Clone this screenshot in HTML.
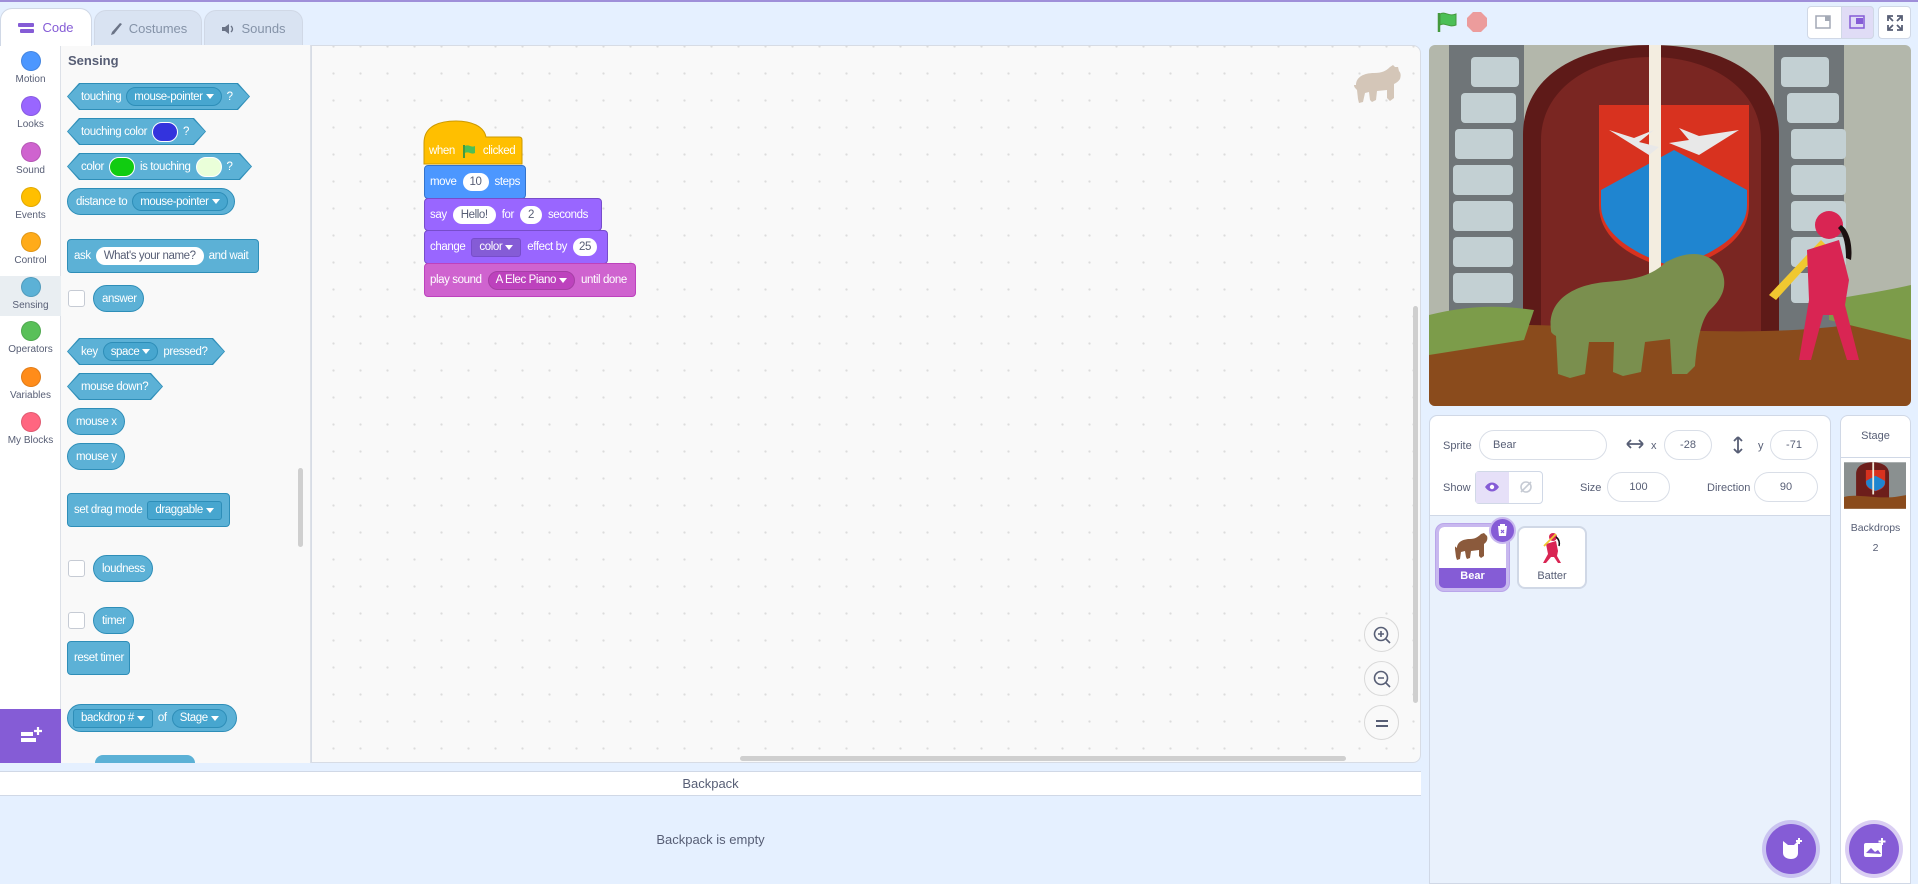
<!DOCTYPE html>
<html><head><meta charset="utf-8">
<style>
*{box-sizing:border-box;margin:0;padding:0}
body{width:1918px;height:884px;overflow:hidden;background:#e5f0ff;font-family:"Liberation Sans",Arial,sans-serif;position:relative}
.a{position:absolute}
.tab{position:absolute;top:10px;height:36px;border:1px solid #d0d8e6;border-bottom:none;border-radius:12px 12px 0 0;background:#d9e3f2;color:#8593a8;font-size:13px;display:flex;align-items:center;justify-content:center;gap:6px}
.cat{position:absolute;left:0;width:61px;text-align:center;font-size:10px;color:#575e75}
.cat i{display:block;width:20px;height:20px;border-radius:50%;margin:0 auto 3px;border:1px solid rgba(0,0,0,.12)}
.blk{position:absolute;color:#fff;font-size:11.5px;letter-spacing:-0.4px;display:flex;align-items:center;gap:5px;white-space:nowrap}
.sen{background:#5cb1d6;border:1px solid #2e8eb8}
.hex{clip-path:polygon(12px 0,calc(100% - 12px) 0,100% 50%,calc(100% - 12px) 100%,12px 100%,0 50%);border:none;padding:0 13px}
.rep{border-radius:16px;padding:0 8px}
.stk{border-radius:4px;padding:0 6px}
.dd{background:#47a6cf;border:1px solid #2e8eb8;border-radius:14px;padding:2px 7px;display:flex;align-items:center;gap:3px}
.dd:after{content:"";border:4px solid transparent;border-top:5px solid #fff;margin-top:4px}
.inp{background:#fff;color:#575e75;border-radius:12px;padding:3px 8px}
.cb{position:absolute;left:68px;width:17px;height:17px;background:#fff;border:1px solid #c6cbd4;border-radius:3px}
.sb{position:absolute;display:flex;align-items:center;padding:0 5px;gap:6px;color:#fff;font-size:11.5px;letter-spacing:-0.4px;border-radius:4px;white-space:nowrap}
.fld{position:absolute;height:30px;border:1px solid #d9dee7;border-radius:16px;background:#fff;font-size:11px;color:#575e75;display:flex;align-items:center;justify-content:center}
.lbl{position:absolute;font-size:11px;color:#575e75}
.zb{position:absolute;left:1364px;width:35px;height:35px;border-radius:50%;border:1px solid #d9d9d9;background:#f9f9f9;display:flex;align-items:center;justify-content:center}
</style></head><body>
<div class="a" style="left:0;top:0;width:1918px;height:2px;background:#9f8fd9"></div>

<div class="tab" style="left:0;width:92px;background:#fff;color:#855cd6;top:8px;height:38px;z-index:2">
<svg width="18" height="12"><rect x="0" y="1" width="16" height="4" rx="1" fill="#855cd6"/><rect x="2" y="7" width="14" height="4" rx="1" fill="#855cd6"/></svg>Code</div>
<div class="tab" style="left:94px;width:108px"><svg width="14" height="14"><path d="M2 13l3-1 8-10-2-1-8 9z" fill="#6b7487"/></svg>Costumes</div>
<div class="tab" style="left:204px;width:99px"><svg width="14" height="14"><path d="M1 5h3l4-3v10l-4-3H1z" fill="#6b7487"/><path d="M10 4c2 2 2 4 0 6" stroke="#6b7487" fill="none" stroke-width="1.4"/></svg>Sounds</div>

<div class="a" style="left:0;top:45px;width:61px;height:718px;background:#fff;border-right:1px solid #dde1e8"></div>
<div class="a" style="left:0;top:276px;width:61px;height:40px;background:#e9eef2"></div>
<div class="cat" style="top:51px"><i style="background:#4c97ff"></i>Motion</div>
<div class="cat" style="top:96px"><i style="background:#9966ff"></i>Looks</div>
<div class="cat" style="top:142px"><i style="background:#cf63cf"></i>Sound</div>
<div class="cat" style="top:187px"><i style="background:#ffbf00"></i>Events</div>
<div class="cat" style="top:232px"><i style="background:#ffab19"></i>Control</div>
<div class="cat" style="top:277px"><i style="background:#5cb1d6"></i>Sensing</div>
<div class="cat" style="top:321px"><i style="background:#59c059"></i>Operators</div>
<div class="cat" style="top:367px"><i style="background:#ff8c1a"></i>Variables</div>
<div class="cat" style="top:412px"><i style="background:#ff6680"></i>My Blocks</div>
<div class="a" style="left:0;top:709px;width:61px;height:54px;background:#855cd6;display:flex;align-items:center;justify-content:center">
<svg width="26" height="22"><rect x="3" y="7" width="12" height="4" fill="#fff"/><rect x="3" y="13" width="15" height="4" fill="#fff"/><path d="M20 2v8M16 6h8" stroke="#fff" stroke-width="2.2"/></svg></div>

<div class="a" style="left:61px;top:45px;width:250px;height:718px;background:#f9f9f9;border-right:1px solid #dde1e8"></div>
<div class="a" style="left:68px;top:53px;font-size:13px;font-weight:bold;color:#575e75">Sensing</div>
<div class="a" style="left:298px;top:468px;width:5px;height:79px;background:#cfcfcf;border-radius:3px"></div>

<div class="blk hex" style="left:67px;top:83px;width:183px;height:27px;background:#2e8eb8"><div class="blk hex" style="left:1px;top:1px;right:1px;bottom:1px;background:#5cb1d6">touching <span class="dd">mouse-pointer</span> ?</div></div>
<div class="blk hex" style="left:67px;top:118px;width:139px;height:27px;background:#2e8eb8"><div class="blk hex" style="left:1px;top:1px;right:1px;bottom:1px;background:#5cb1d6">touching color <span style="width:26px;height:20px;border-radius:10px;background:#3333dd;border:1px solid #fff;display:inline-block"></span> ?</div></div>
<div class="blk hex" style="left:67px;top:153px;width:185px;height:27px;background:#2e8eb8"><div class="blk hex" style="left:1px;top:1px;right:1px;bottom:1px;background:#5cb1d6">color <span style="width:26px;height:20px;border-radius:10px;background:#11cc11;border:1px solid #fff;display:inline-block"></span> is touching <span style="width:26px;height:20px;border-radius:10px;background:#eaffd9;border:1px solid #fff;display:inline-block"></span> ?</div></div>
<div class="blk sen rep" style="left:67px;top:188px;width:168px;height:27px">distance to <span class="dd">mouse-pointer</span></div>
<div class="blk sen stk" style="left:67px;top:239px;width:192px;height:34px">ask <span class="inp">What's your name?</span> and wait</div>
<div class="cb" style="top:290px"></div>
<div class="blk sen rep" style="left:93px;top:285px;width:51px;height:27px">answer</div>
<div class="blk hex" style="left:67px;top:338px;width:158px;height:27px;background:#2e8eb8"><div class="blk hex" style="left:1px;top:1px;right:1px;bottom:1px;background:#5cb1d6">key <span class="dd">space</span> pressed?</div></div>
<div class="blk hex" style="left:67px;top:373px;width:96px;height:27px;background:#2e8eb8"><div class="blk hex" style="left:1px;top:1px;right:1px;bottom:1px;background:#5cb1d6">mouse down?</div></div>
<div class="blk sen rep" style="left:67px;top:408px;width:58px;height:27px">mouse x</div>
<div class="blk sen rep" style="left:67px;top:443px;width:58px;height:27px">mouse y</div>
<div class="blk sen stk" style="left:67px;top:493px;width:163px;height:34px">set drag mode <span class="dd" style="border-radius:3px">draggable</span></div>
<div class="cb" style="top:560px"></div>
<div class="blk sen rep" style="left:93px;top:555px;width:60px;height:27px">loudness</div>
<div class="cb" style="top:612px"></div>
<div class="blk sen rep" style="left:93px;top:607px;width:41px;height:27px">timer</div>
<div class="blk sen stk" style="left:67px;top:641px;width:63px;height:34px">reset timer</div>
<div class="blk sen rep" style="left:67px;top:704px;width:170px;height:28px;padding:0 5px">
<span class="dd" style="border-radius:3px">backdrop #</span> of <span class="dd">Stage</span></div>
<div class="a" style="left:95px;top:755px;width:100px;height:8px;background:#5cb1d6;border-radius:8px 8px 0 0"></div>

<div class="a" style="left:311px;top:45px;width:1110px;height:718px;background-color:#f9f9f9;background-image:radial-gradient(#dcdcdc 1px,transparent 1.3px);background-size:27px 27px;background-position:8px 14px;border:1px solid #d7dce5;border-radius:0 8px 8px 0"></div>
<svg class="a" style="left:1352px;top:63px" width="50" height="45" viewBox="0 0 50 45"><path d="M4 22c0-8 8-12 18-12 8 0 12-2 16-6l3-2 2 2 3 0 1 4c2 2 2 5 1 8-2 3-4 4-6 5l0 14-4 3-3-3 0-8-10 1-1 9-4 2-2-2-1-8-4 1-2 9-4 1-1-4-1-9c-2-2-3-3-3-5z" fill="#d4c6b8"/></svg>
<div class="a" style="left:1413px;top:306px;width:5px;height:397px;background:#cfcfcf;border-radius:3px"></div>
<div class="a" style="left:740px;top:756px;width:606px;height:5px;background:#cfcfcf;border-radius:3px"></div>
<div class="zb" style="top:617px"><svg width="20" height="20"><circle cx="9" cy="9" r="6.5" fill="none" stroke="#575e75" stroke-width="1.6"/><path d="M14 14l4 4M6 9h6M9 6v6" stroke="#575e75" stroke-width="1.6"/></svg></div>
<div class="zb" style="top:661px"><svg width="20" height="20"><circle cx="9" cy="9" r="6.5" fill="none" stroke="#575e75" stroke-width="1.6"/><path d="M14 14l4 4M6 9h6" stroke="#575e75" stroke-width="1.6"/></svg></div>
<div class="zb" style="top:705px"><svg width="20" height="20"><path d="M4 8h12M4 13h12" stroke="#575e75" stroke-width="2"/></svg></div>

<!-- script -->
<svg class="a" style="left:423px;top:119px" width="100" height="48"><path d="M1 24C1 6 18 2 33 2s28 5 30 16L96 18c2 0 3 1 3 3v24H1z" fill="#ffbf00" stroke="#cc9900"/></svg>
<div class="sb" style="left:424px;top:137px;height:28px;background:transparent">when <svg width="16" height="16"><path d="M3 2v13" stroke="#45993d" stroke-width="2"/><path d="M4 3c4-2 6 2 10 0v7c-4 2-6-2-10 0z" fill="#4cbf56"/></svg> clicked</div>
<div class="sb" style="left:424px;top:165px;width:102px;height:34px;background:#4c97ff;border:1px solid #3373cc">move <span class="inp" style="padding:3px 7px">10</span> steps</div>
<div class="sb" style="left:424px;top:198px;width:178px;height:33px;background:#9966ff;border:1px solid #774dcb">say <span class="inp">Hello!</span> for <span class="inp">2</span> seconds</div>
<div class="sb" style="left:424px;top:230px;width:184px;height:34px;background:#9966ff;border:1px solid #774dcb">change <span class="dd" style="background:#855cd6;border-color:#774dcb;border-radius:3px">color</span> effect by <span class="inp" style="padding:3px 6px">25</span></div>
<div class="sb" style="left:424px;top:263px;width:212px;height:34px;background:#cf63cf;border:1px solid #bd42bd">play sound <span class="dd" style="background:#bd42bd;border-color:#a63fa6">A Elec Piano</span> until done</div>

<div class="a" style="left:0;top:771px;width:1421px;height:113px;background:#e5f0ff;border-top:1px solid #d0d8e6"></div>
<div class="a" style="left:0;top:772px;width:1421px;height:24px;background:#fff;border-bottom:1px solid #d0d8e6;text-align:center;font-size:13px;color:#575e75;line-height:24px">Backpack</div>
<div class="a" style="left:0;top:832px;width:1421px;text-align:center;font-size:13px;color:#575e75">Backpack is empty</div>

<svg class="a" style="left:1436px;top:11px" width="22" height="22"><path d="M3 2v19" stroke="#45993d" stroke-width="2.5"/><path d="M4 3c5-3 9 3 16 0v11c-7 3-11-3-16 0z" fill="#4cbf56" stroke="#45993d"/></svg>
<div class="a" style="left:1467px;top:12px;width:20px;height:20px;background:#ec9c9c;clip-path:polygon(30% 0,70% 0,100% 30%,100% 70%,70% 100%,30% 100%,0 70%,0 30%)"></div>
<div class="a" style="left:1807px;top:6px;width:67px;height:33px;border:1px solid #d0d8e6;border-radius:4px;background:#fff"></div>
<div class="a" style="left:1841px;top:6px;width:33px;height:33px;background:#e0dcf6;border:1px solid #d0d8e6;border-radius:0 4px 4px 0"></div>
<svg class="a" style="left:1815px;top:15px" width="16" height="14"><rect x="1" y="1" width="14" height="12" fill="none" stroke="#a3a9b5" stroke-width="1.5"/><rect x="10" y="1" width="5" height="5" fill="#a3a9b5"/></svg>
<svg class="a" style="left:1849px;top:15px" width="16" height="14"><rect x="1" y="1" width="14" height="12" fill="none" stroke="#855cd6" stroke-width="1.5"/><rect x="7" y="3" width="7" height="6" fill="#855cd6"/></svg>
<div class="a" style="left:1878px;top:6px;width:33px;height:33px;border:1px solid #d0d8e6;border-radius:4px;background:#fff"></div>
<svg class="a" style="left:1886px;top:14px" width="18" height="18"><path d="M2 7V2h5M11 2h5v5M16 11v5h-5M7 16H2v-5M2 2l5 5M16 2l-5 5M16 16l-5-5M2 16l5-5" stroke="#575e75" stroke-width="1.8" fill="none"/></svg>

<!-- stage -->
<svg class="a" style="left:1429px;top:45px" width="482" height="361" viewBox="0 0 482 361">
<defs><clipPath id="c"><rect width="482" height="361" rx="6"/></clipPath></defs>
<g clip-path="url(#c)">
<rect width="482" height="361" fill="#b3b7ab"/>
<rect x="20" y="0" width="75" height="290" fill="#6f7578"/>
<rect x="345" y="0" width="70" height="290" fill="#6f7578"/>
<g fill="#c3d0d3">
<rect x="42" y="12" width="48" height="30" rx="4"/><rect x="32" y="48" width="55" height="30" rx="4"/><rect x="26" y="84" width="58" height="30" rx="4"/><rect x="24" y="120" width="60" height="30" rx="4"/><rect x="24" y="156" width="60" height="30" rx="4"/><rect x="24" y="192" width="60" height="30" rx="4"/><rect x="24" y="228" width="60" height="30" rx="4"/>
<rect x="352" y="12" width="48" height="30" rx="4"/><rect x="358" y="48" width="52" height="30" rx="4"/><rect x="362" y="84" width="55" height="30" rx="4"/><rect x="362" y="120" width="55" height="30" rx="4"/><rect x="362" y="156" width="55" height="30" rx="4"/><rect x="362" y="192" width="55" height="30" rx="4"/><rect x="362" y="228" width="55" height="30" rx="4"/>
</g>
<path d="M94 300V90C94 30 150 0 222 0s128 30 128 90v210z" fill="#5e1a18"/>
<path d="M112 300V95C112 45 160 12 222 12s110 33 110 83v205z" fill="#7a2622"/>
<path d="M170 60h150v100c0 35-35 55-75 65-40-10-75-30-75-65z" fill="#d8321f"/>
<path d="M172 145l73-40 73 40v15c0 30-35 50-73 62-38-12-73-32-73-62z" fill="#1f85d0"/>
<rect x="220" y="0" width="12" height="250" fill="#f3ede0"/>
<path d="M180 85l40 25 10-8-20-5 15-12-20 8zM310 85l-40 25-30-12 20-3-10-12 20 8z" fill="#e8e8e8"/>
<path d="M0 290c60-15 100-10 240-5s180-5 242-15v91H0z" fill="#8a4b1c"/>
<path d="M0 270c40-10 70-10 105-5l-10 30-95 15zM400 255c30-5 60-10 82-15v55l-82-20z" fill="#7c9c4a"/>
<g transform="translate(0,55)">
<path d="M122 230c-4-28 20-45 55-48 25-2 45-5 60-20 10-5 18-8 28-8 15 0 28 10 30 25 2 15-8 25-15 32-8 10-12 30-14 55l-8 8h-15l-2-35-25 3-4 30-18 4-10-4 1-30-25 0-4 32-15 4-12-4-2-38c-5-3-5-4-5-6z" fill="#7a8f4e"/>
</g>
<path d="M340 250l52-55 5 5-50 55z" fill="#f0c830"/>
<circle cx="400" cy="180" r="14" fill="#d92553"/>
<path d="M378 205l32-10 10 40-4 25 14 55h-12l-14-45-10 0-12 45h-12l10-60z" fill="#d92553"/>
<path d="M412 180c8 5 12 20 10 35l-5-2c0-15-3-25-8-30z" fill="#1a1010"/>
</g></svg>

<div class="a" style="left:1429px;top:415px;width:402px;height:469px;background:#e9f1fc;border:1px solid #d0d8e6;border-radius:8px 8px 0 0"></div>
<div class="a" style="left:1430px;top:416px;width:400px;height:100px;background:#fff;border-bottom:1px solid #d0d8e6;border-radius:8px 8px 0 0"></div>
<div class="lbl" style="left:1443px;top:440px">Sprite</div>
<div class="fld" style="left:1479px;top:430px;width:128px;justify-content:flex-start;padding-left:13px">Bear</div>
<svg class="a" style="left:1626px;top:439px" width="18" height="10"><path d="M1 5h16M1 5l4-4M1 5l4 4M17 5l-4-4M17 5l-4 4" stroke="#575e75" stroke-width="1.8" fill="none"/></svg>
<div class="lbl" style="left:1651px;top:440px">x</div>
<div class="fld" style="left:1664px;top:430px;width:48px">-28</div>
<svg class="a" style="left:1733px;top:436px" width="10" height="18"><path d="M5 1v16M5 1L1 5M5 1l4 4M5 17l-4-4M5 17l4-4" stroke="#575e75" stroke-width="1.8" fill="none"/></svg>
<div class="lbl" style="left:1758px;top:440px">y</div>
<div class="fld" style="left:1770px;top:430px;width:48px">-71</div>
<div class="lbl" style="left:1443px;top:482px">Show</div>
<div class="a" style="left:1475px;top:471px;width:68px;height:33px;border:1px solid #d0d8e6;border-radius:4px;background:#fff"></div>
<div class="a" style="left:1476px;top:472px;width:33px;height:31px;background:#e6e0f8"></div>
<svg class="a" style="left:1484px;top:481px" width="16" height="12"><path d="M1 6c4-6 10-6 14 0-4 6-10 6-14 0z" fill="#855cd6"/><circle cx="8" cy="6" r="2.2" fill="#fff"/></svg>
<svg class="a" style="left:1518px;top:479px" width="16" height="16"><circle cx="8" cy="8" r="5" fill="none" stroke="#c6cbd4" stroke-width="1.6"/><path d="M3 13L13 3" stroke="#c6cbd4" stroke-width="1.6"/></svg>
<div class="lbl" style="left:1580px;top:482px">Size</div>
<div class="fld" style="left:1607px;top:472px;width:63px">100</div>
<div class="lbl" style="left:1707px;top:482px">Direction</div>
<div class="fld" style="left:1754px;top:472px;width:64px">90</div>

<div class="a" style="left:1436px;top:524px;width:73px;height:67px;border-radius:8px;background:#855cd6;border:3px solid #c8b8ef;box-shadow:0 0 0 1px #b9a5ea"></div>
<div class="a" style="left:1439px;top:527px;width:67px;height:41px;background:#fff;border-radius:5px 5px 0 0"></div>
<svg class="a" style="left:1455px;top:530px" width="34" height="34" viewBox="0 0 34 34"><path d="M2 18c0-6 6-9 13-9 5 0 8-2 11-5l3-1 3 3c1 3 0 6-3 8l0 12-3 2-2-2 0-6-8 1-1 7-3 1-1-2-1-6-4 1-1 7-3 1-1-3-1-8c-2-1-3-3-3-5z" fill="#8b5a3c"/></svg>
<div class="a" style="left:1439px;top:570px;width:67px;text-align:center;color:#fff;font-size:11px;font-weight:bold">Bear</div>
<div class="a" style="left:1489px;top:517px;width:27px;height:27px;border-radius:50%;background:#855cd6;border:2px solid #c8b8ef"></div>
<svg class="a" style="left:1496px;top:523px" width="13" height="14"><path d="M1 3h11M4 3V1h5v2M2 3l1 10h7l1-10z" fill="#fff"/><path d="M5 7l3 3M8 7l-3 3" stroke="#855cd6" stroke-width="1.2"/></svg>
<div class="a" style="left:1517px;top:526px;width:70px;height:63px;border-radius:8px;background:#fff;border:2px solid #d0d8e6"></div>
<svg class="a" style="left:1540px;top:532px" width="24" height="32" viewBox="0 0 24 32"><circle cx="13" cy="5" r="4" fill="#d92553"/><path d="M6 12l10-3 2 10-1 5 4 7h-3l-4-6-3 0-5 6h-3l5-9z" fill="#d92553"/><path d="M4 14l12-12" stroke="#f0c830" stroke-width="1.8"/><path d="M16 5c3 2 4 6 3 9" stroke="#111" stroke-width="1.5" fill="none"/></svg>
<div class="a" style="left:1517px;top:570px;width:70px;text-align:center;color:#575e75;font-size:11px">Batter</div>

<div class="a" style="left:1766px;top:824px;width:50px;height:50px;border-radius:50%;background:#855cd6;box-shadow:0 0 0 4px rgba(133,92,214,.3);display:flex;align-items:center;justify-content:center"><svg width="24" height="24"><path d="M4 4l5 4h6l4-4v12c0 4-3 6-7 6s-8-2-8-6z" fill="#fff"/><path d="M20 1v6M17 4h6" stroke="#fff" stroke-width="2"/></svg></div>

<div class="a" style="left:1840px;top:415px;width:71px;height:469px;background:#fff;border:1px solid #d0d8e6;border-radius:8px 8px 0 0"></div>
<div class="a" style="left:1840px;top:430px;width:71px;text-align:center;font-size:11px;color:#575e75">Stage</div>
<div class="a" style="left:1841px;top:457px;width:69px;height:1px;background:#d0d8e6"></div>
<svg class="a" style="left:1844px;top:462px" width="62" height="47" viewBox="0 0 482 361"><rect width="482" height="361" fill="#8a9090"/><path d="M94 290V90C94 30 150 0 222 0s128 30 128 90v200z" fill="#6d1e1b"/><path d="M170 60h150v100c0 35-35 55-75 65-40-10-75-30-75-65z" fill="#d8321f"/><path d="M172 145l73-40 73 40v15c0 30-35 50-73 62-38-12-73-32-73-62z" fill="#1f85d0"/><rect x="220" y="0" width="14" height="250" fill="#f0e8d6"/><path d="M0 270c60-15 100-10 240 0s180-5 242-15v106H0z" fill="#8a4b1c"/></svg>
<div class="a" style="left:1840px;top:522px;width:71px;text-align:center;font-size:10.5px;color:#575e75">Backdrops</div>
<div class="a" style="left:1840px;top:542px;width:71px;text-align:center;font-size:10.5px;color:#575e75">2</div>
<div class="a" style="left:1849px;top:824px;width:50px;height:50px;border-radius:50%;background:#855cd6;box-shadow:0 0 0 4px rgba(133,92,214,.3);display:flex;align-items:center;justify-content:center"><svg width="24" height="22"><rect x="2" y="5" width="18" height="14" rx="2" fill="#fff"/><path d="M4 15l5-5 4 4 3-2 3 4" fill="#855cd6"/><path d="M20 0v7M16.5 3.5h7" stroke="#fff" stroke-width="2"/></svg></div>
</body></html>
